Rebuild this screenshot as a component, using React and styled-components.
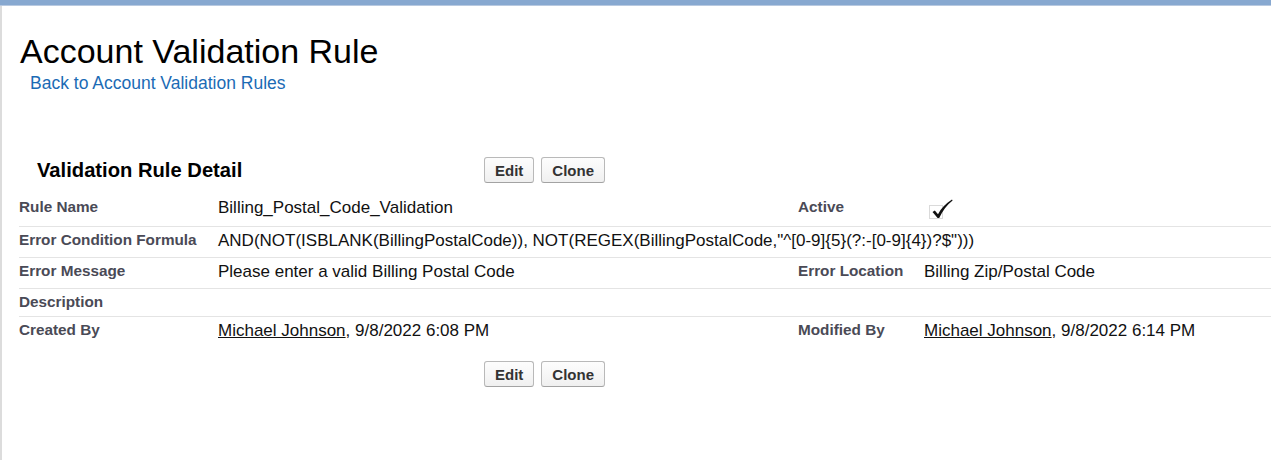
import React from "react";
import styled, { createGlobalStyle } from "styled-components";

const GlobalStyle = createGlobalStyle`
    body {
        margin: 0;
        background: #fff;
        font-family: "Liberation Sans", Arial, sans-serif;
        color: #000;
    }
`;

const Band = styled.div`
    height: 5px;
    background: #87a8d0;
    border-bottom: 1px solid #b8c9e0;
`;

const PageBody = styled.div`
    min-height: 454px;
    box-sizing: border-box;
    border-left: 2px solid #dcdcdc;
    padding: 25px 0 0 18px;
`;

const PageTitle = styled.h1`
    margin: 0;
    font-size: 34px;
    line-height: 40px;
    font-weight: normal;
    color: #000;
`;

const BackLink = styled.a`
    display: block;
    margin: 2px 0 0 10px;
    font-size: 17.5px;
    line-height: 20px;
    color: #1b6bb5;
    text-decoration: none;
`;

const Section = styled.div`
    margin: 64px 0 0 -1px;
`;

const SectionHeader = styled.div`
    display: flex;
    align-items: center;
    margin-bottom: 11px;
`;

const HeaderTitle = styled.h2`
    margin: 0;
    width: 465px;
    box-sizing: border-box;
    padding-left: 18px;
    font-size: 20.2px;
    line-height: 24px;
    font-weight: bold;
    color: #000;
`;

const Spacer = styled.div`
    width: 465px;
`;

const ButtonGroup = styled.div`
    display: flex;
    gap: 7px;
`;

const Button = styled.button`
    height: 26px;
    padding: 0 10px;
    border: 1px solid #b9b9b9;
    border-bottom-color: #a3a3a3;
    border-radius: 3px;
    background: linear-gradient(#fdfdfd, #f0f0f0);
    font-family: "Liberation Sans", Arial, sans-serif;
    font-size: 15px;
    font-weight: bold;
    color: #333;
    cursor: pointer;
`;

const Footer = styled.div`
    display: flex;
    margin-top: 14px;
`;

const DetailRow = styled.div`
    display: grid;
    grid-template-columns: 199px 580px 126px 1fr;
    align-items: start;
    border-bottom: 1px solid #e4e4e4;
    &:last-child {
        border-bottom: none;
    }
`;

const Label = styled.div`
    padding: 4px 0 5px;
    font-size: 15.3px;
    line-height: 18px;
    font-weight: bold;
    color: #4a4a56;
`;

const Value = styled.div`
    grid-column: ${(p) => (p.$wide ? "span 3" : "span 1")};
    padding: 4px 0 6px;
    font-size: 17px;
    line-height: 20px;
    color: #111;
    white-space: nowrap;
`;

const UserLink = styled.a`
    color: #111;
    text-decoration: underline;
`;

const CheckImage = styled.svg`
    display: block;
    margin-left: 5px;
`;

const ActiveCheck = () => (
	<CheckImage width="24" height="22" viewBox="0 0 24 22">
		<rect x="0.5" y="7.5" width="13" height="13" fill="none" stroke="#b5b5b5" strokeDasharray="1 1" />
		<path
			d="M3.5 14 L5.8 12.6 L9 16.2 C12 10.5 16.5 5.5 23 1.5 L23.6 2.6 C18 7 13.8 12.6 10.2 20 L8.6 20 Z"
			fill="#111"
		/>
	</CheckImage>
);

const Actions = () => (
	<ButtonGroup>
		<Button>Edit</Button>
		<Button>Clone</Button>
	</ButtonGroup>
);

const App = () => {
	return (
		<>
			<GlobalStyle />
			<Band />
			<PageBody>
				<PageTitle>Account Validation Rule</PageTitle>
				<BackLink href="#">Back to Account Validation Rules</BackLink>

				<Section>
					<SectionHeader>
						<HeaderTitle>Validation Rule Detail</HeaderTitle>
						<Actions />
					</SectionHeader>

					<div>
						<DetailRow>
							<Label>Rule Name</Label>
							<Value>Billing_Postal_Code_Validation</Value>
							<Label>Active</Label>
							<Value>
								<ActiveCheck />
							</Value>
						</DetailRow>
						<DetailRow>
							<Label>Error Condition Formula</Label>
							<Value $wide>
								AND(NOT(ISBLANK(BillingPostalCode)), NOT(REGEX(BillingPostalCode,"^[0-9]{"{"}5{"}"}(?:-[0-9]{"{"}4{"}"})?$")))
							</Value>
						</DetailRow>
						<DetailRow>
							<Label>Error Message</Label>
							<Value>Please enter a valid Billing Postal Code</Value>
							<Label>Error Location</Label>
							<Value>Billing Zip/Postal Code</Value>
						</DetailRow>
						<DetailRow>
							<Label>Description</Label>
							<Value $wide />
						</DetailRow>
						<DetailRow>
							<Label>Created By</Label>
							<Value>
								<UserLink href="#">Michael Johnson</UserLink>, 9/8/2022 6:08 PM
							</Value>
							<Label>Modified By</Label>
							<Value>
								<UserLink href="#">Michael Johnson</UserLink>, 9/8/2022 6:14 PM
							</Value>
						</DetailRow>
					</div>

					<Footer>
						<Spacer />
						<Actions />
					</Footer>
				</Section>
			</PageBody>
		</>
	);
};

export default App;
